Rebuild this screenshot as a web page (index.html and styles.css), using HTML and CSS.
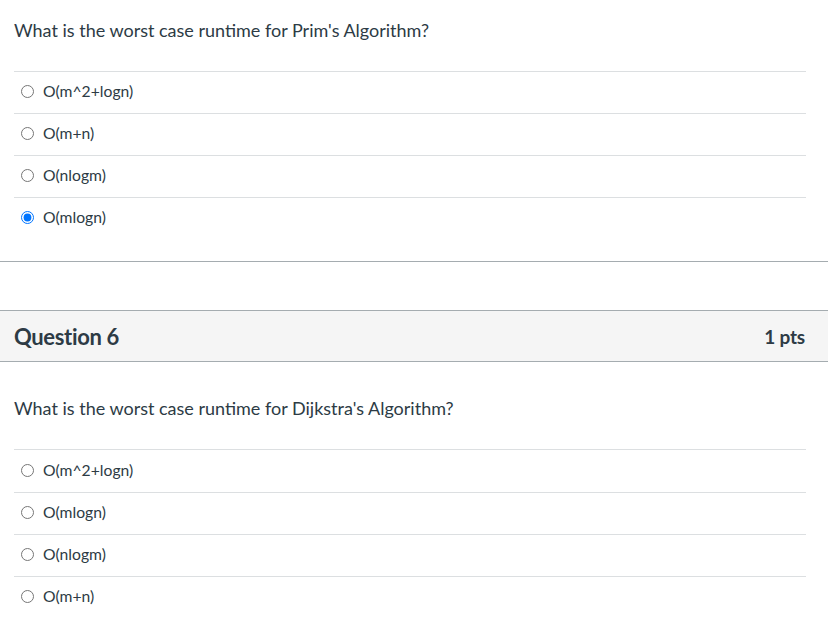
FILE: index.html
```html
<!DOCTYPE html>
<html>
<head>
<meta charset="utf-8">
<link rel="stylesheet" href="styles.css">
</head>
<body>
<section class="question first">
  <div class="q-body">
    <p class="q-text">What is the worst case runtime for Prim's Algorithm?</p>
    <ul class="answers">
      <li class="answer"><input type="radio" name="q5"><span>O(m^2+logn)</span></li>
      <li class="answer"><input type="radio" name="q5"><span>O(m+n)</span></li>
      <li class="answer"><input type="radio" name="q5"><span>O(nlogm)</span></li>
      <li class="answer"><input type="radio" name="q5" checked><span>O(mlogn)</span></li>
    </ul>
  </div>
</section>
<section class="question second">
  <header class="q-header">
    <h2 class="q-name">Question 6</h2>
    <span class="q-pts">1 pts</span>
  </header>
  <div class="q-body">
    <p class="q-text">What is the worst case runtime for Dijkstra's Algorithm?</p>
    <ul class="answers">
      <li class="answer"><input type="radio" name="q6"><span>O(m^2+logn)</span></li>
      <li class="answer"><input type="radio" name="q6"><span>O(mlogn)</span></li>
      <li class="answer"><input type="radio" name="q6"><span>O(nlogm)</span></li>
      <li class="answer"><input type="radio" name="q6"><span>O(m+n)</span></li>
    </ul>
  </div>
</section>
</body>
</html>
```
FILE: styles.css
```css
* { box-sizing: border-box; }
html, body { margin: 0; padding: 0; background: #fff; }
body {
  font-family: Lato, "Liberation Sans", sans-serif;
  color: #2d3b45;
  width: 828px;
  overflow: hidden;
}
.question.first {
  border-bottom: 1px solid #a5acb0;
  padding-top: 19px;
  padding-bottom: 22px;
}
.question.second {
  margin-top: 48px;
}
.q-header {
  display: flex;
  justify-content: space-between;
  align-items: center;
  height: 52px;
  background: #f5f5f5;
  border-top: 1px solid #a5acb0;
  border-bottom: 1px solid #a5acb0;
  padding: 0 23px 0 14px;
}
.q-name {
  margin: 0;
  font-size: 22px;
  font-weight: 700;
  letter-spacing: -0.35px;
}
.q-pts {
  font-size: 19px;
  font-weight: 700;
  letter-spacing: -0.2px;
}
.q-body {
  padding: 0 22px 0 14px;
}
.second .q-body { padding-top: 35px; }
.q-text {
  margin: 0;
  font-size: 18px;
  line-height: 22px;
  height: 23px;
}
.answers {
  list-style: none;
  margin: 29px 0 0;
  padding: 0;
}
.answer {
  display: flex;
  align-items: center;
  height: 42px;
  border-top: 1px solid #dcdfe1;
  font-size: 15.7px;
  padding-bottom: 3px;
}
.second .answer:first-child { height: 43px; }
.answer input {
  margin: 1px 9px 0 7px;
  width: 13px;
  height: 13px;
}
```
